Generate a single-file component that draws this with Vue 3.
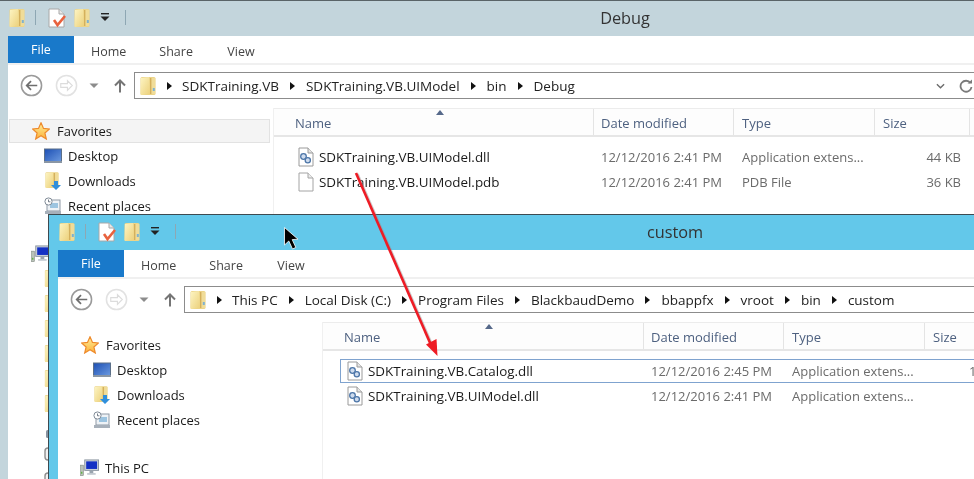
<template>
  <div class="stage">
    <svg class="defs" width="0" height="0">
      <defs>
        <linearGradient id="leaf" x1="0" y1="0" x2="1" y2="1">
          <stop offset="0" stop-color="#fdf5c4" />
          <stop offset="1" stop-color="#ecd07a" />
        </linearGradient>
        <linearGradient id="screen" x1="0" y1="0" x2="1" y2="1">
          <stop offset="0" stop-color="#1c4fb4" />
          <stop offset="1" stop-color="#6d9be0" />
        </linearGradient>
        <linearGradient id="starfill" x1="0" y1="0" x2="0" y2="1">
          <stop offset="0" stop-color="#fff09a" />
          <stop offset="1" stop-color="#fbb13a" />
        </linearGradient>
        <symbol id="i-folder" viewBox="0 0 16 20">
          <rect x="0.5" y="1" width="15" height="18" rx="1.5" fill="#ecd488" />
          <path d="M1 2 L9 1 L10 18 L1.5 19 Q0.5 19 0.5 18 Z" fill="url(#leaf)" />
          <rect x="10" y="2" width="1.6" height="16" fill="#d4b05c" />
          <rect x="11.6" y="2" width="3.6" height="16" fill="#f0dc98" />
          <rect x="12.8" y="12" width="2" height="3" fill="#7fb2cf" />
        </symbol>
        <symbol id="i-note" viewBox="0 0 18 20">
          <path d="M1 1 H11 L16 6 V19 H1 Z" fill="#fff" stroke="#a8a8a8" />
          <path d="M11 1 V6 H16" fill="#e8e8e8" stroke="#a8a8a8" />
          <path d="M6 12 L9.5 17 L17 8" fill="none" stroke="#e8623e" stroke-width="2.6" />
        </symbol>
        <symbol id="i-dll" viewBox="0 0 16 20">
          <path d="M1 1 H10 L15 6 V19 H1 Z" fill="#fff" stroke="#9a9a9a" />
          <path d="M10 1 V6 H15" fill="#e4e4e4" stroke="#9a9a9a" />
          <circle cx="5.5" cy="9.5" r="2.8" fill="#cfdcee" stroke="#4d76a8" stroke-width="1.3" />
          <circle cx="9.8" cy="13.2" r="2.6" fill="#cfdcee" stroke="#4d76a8" stroke-width="1.3" />
        </symbol>
        <symbol id="i-file" viewBox="0 0 16 20">
          <path d="M1 1 H10 L15 6 V19 H1 Z" fill="#fff" stroke="#a4a4a4" />
          <path d="M10 1 V6 H15" fill="#ececec" stroke="#a4a4a4" />
        </symbol>
        <symbol id="i-star" viewBox="0 0 18 18">
          <path d="M9 0.8 L11.5 6.4 L17.4 7 L12.9 11 L14.3 17 L9 13.8 L3.7 17 L5.1 11 L0.6 7 L6.5 6.4 Z" fill="url(#starfill)" stroke="#ee8a2c" stroke-width="1.2" />
        </symbol>
        <symbol id="i-desktop" viewBox="0 0 18 16">
          <rect x="0.5" y="1" width="17" height="13" fill="url(#screen)" stroke="#5b6f88" />
          <rect x="0" y="13" width="18" height="2" fill="#8a96a4" />
        </symbol>
        <symbol id="i-dl" viewBox="0 0 16 20">
          <use href="#i-folder" width="14" height="18" x="0" y="0" />
          <path d="M9 10 H13 V14 H16 L11 19 L6 14 H9 Z" fill="#2f8fdc" />
        </symbol>
        <symbol id="i-recent" viewBox="0 0 18 18">
          <rect x="3" y="3" width="13" height="11" fill="#eef2f6" stroke="#8f9aa6" />
          <rect x="6" y="6" width="8" height="5" fill="#9cc4e0" />
          <circle cx="4.5" cy="4.5" r="3.6" fill="#fff" stroke="#7f8a96" />
          <path d="M4.5 2.5 V4.8 H6.4" fill="none" stroke="#55606c" stroke-width="0.8" />
          <rect x="1" y="14" width="16" height="3" fill="#a7b0ba" />
        </symbol>
        <symbol id="i-pc" viewBox="0 0 20 18">
          <rect x="0" y="6" width="3.5" height="11" fill="#b9c2b9" stroke="#7c867c" stroke-width="0.6" />
          <rect x="1" y="13" width="1.5" height="2" fill="#63b347" />
          <rect x="5" y="0.5" width="14.5" height="11" fill="#cfd5dc" stroke="#8a94a0" />
          <rect x="6.5" y="2" width="11.5" height="8" fill="#1330c4" />
          <rect x="10" y="11.5" width="4" height="3" fill="#9aa4ae" />
          <rect x="7.5" y="14.5" width="9" height="1.5" fill="#b6bec6" />
        </symbol>
        <symbol id="i-winc" viewBox="0 0 16 18">
          <rect x="7" y="0" width="4" height="4.5" fill="#19b3ec" />
          <rect x="12" y="0" width="4" height="4.5" fill="#19b3ec" />
          <rect x="7" y="5.5" width="4" height="4" fill="#19b3ec" />
          <rect x="12" y="5.5" width="4" height="4" fill="#19b3ec" />
          <rect x="2" y="10" width="14" height="8" rx="1.5" fill="#8793a0" />
        </symbol>
        <symbol id="i-disk" viewBox="0 0 16 18">
          <rect x="1" y="3" width="14" height="12" rx="3" fill="#f2f2f2" stroke="#8f8f8f" stroke-width="1.4" />
        </symbol>
      </defs>
    </svg>

    <section v-for="win in windows" :key="win.title" class="win" :class="win.kind" :style="{ left: win.x + 'px', top: win.y + 'px', width: win.w + 'px', height: win.h + 'px' }">
      <header class="titlebar">
        <svg class="ic-folder first"><use href="#i-folder" /></svg>
        <i class="tsep"></i>
        <svg class="ic-note"><use href="#i-note" /></svg>
        <svg class="ic-folder"><use href="#i-folder" /></svg>
        <svg class="ic-drop" viewBox="0 0 10 9">
          <rect x="1" y="0" width="8" height="1.4" fill="#222" />
          <path d="M0.5 3.5 H9.5 L5 8 Z" fill="#222" />
        </svg>
        <i class="tsep"></i>
        <span class="title">{{ win.title }}</span>
      </header>

      <div class="pane">
        <nav class="ribbon">
          <span class="file-tab">File</span>
          <span v-for="t in tabs" :key="t" class="tab">{{ t }}</span>
        </nav>

        <div class="toolbar">
          <svg class="btn-back" viewBox="0 0 24 24">
            <circle cx="12" cy="12" r="10.5" fill="#fff" stroke="#9a9a9a" stroke-width="1.6" />
            <path d="M18 12 H7 M11.5 7.5 L7 12 L11.5 16.5" fill="none" stroke="#6e6e6e" stroke-width="1.8" />
          </svg>
          <svg class="btn-forward" viewBox="0 0 24 24">
            <circle cx="12" cy="12" r="10.5" fill="#fff" stroke="#e2e2e2" stroke-width="1.6" />
            <path d="M6 10 H13 V7 L18 12 L13 17 V14 H6 Z" fill="none" stroke="#dcdcdc" stroke-width="1.2" />
          </svg>
          <svg class="caret" viewBox="0 0 10 6"><path d="M0.5 0.5 H9.5 L5 5 Z" fill="#8c8c8c" /></svg>
          <svg class="up" viewBox="0 0 12 14">
            <path d="M6 13.5 V2 M1 6.5 L6 1.5 L11 6.5" fill="none" stroke="#757575" stroke-width="2" />
          </svg>
          <div class="address">
            <svg class="ic-folder"><use href="#i-folder" /></svg>
            <template v-for="c in win.crumbs" :key="c">
              <i class="chev"></i>
              <span class="crumb">{{ c }}</span>
            </template>
            <span class="addr-end">
              <svg class="ad-down" viewBox="0 0 10 6"><path d="M1 1 L5 5 L9 1" fill="none" stroke="#6b6b6b" stroke-width="1.5" /></svg>
              <svg class="ad-refresh" viewBox="0 0 14 14">
                <path d="M11.5 4 A5.5 5.5 0 1 0 12.5 8" fill="none" stroke="#7a7a7a" stroke-width="1.8" />
                <path d="M8.5 4.5 H13 V0.5 Z" fill="#7a7a7a" />
              </svg>
            </span>
          </div>
        </div>

        <div class="main">
          <aside class="side">
            <div v-for="(n, i) in navItems" :key="i" class="nav-row" :class="[n.level, { hot: win.hot && i === 0 }]">
              <svg v-if="n.icon" :class="'nav-' + n.icon"><use :href="'#i-' + n.icon" /></svg>
              <!-- the back window's lower tree is covered by the front window -->
              <span v-if="!(win.hot && n.covered)">{{ n.label }}</span>
            </div>
          </aside>

          <div class="list">
            <div class="cols">
              <div class="col c-name">
                Name
                <svg class="sort" viewBox="0 0 8 5"><path d="M0 5 L4 0 L8 5 Z" fill="#56698a" /></svg>
              </div>
              <div class="col c-date">Date modified</div>
              <div class="col c-type">Type</div>
              <div class="col c-size">Size</div>
            </div>
            <div v-for="r in win.rows" :key="r.name" class="row" :class="{ sel: r.sel }">
              <div class="cell r-name">
                <svg class="file-ic"><use :href="'#i-' + r.icon" /></svg>
                {{ r.name }}
              </div>
              <div class="cell c-date">{{ r.date }}</div>
              <div class="cell c-type">{{ r.type }}</div>
              <div class="cell c-size num">{{ r.size }}</div>
            </div>
          </div>
        </div>
      </div>
    </section>

    <!-- annotation arrow and mouse pointer sit over both windows -->
    <svg class="overlay" viewBox="0 0 974 479">
      <path d="M356 173 L431 345" stroke="#8d8d8d" stroke-opacity="0.45" stroke-width="2.6" transform="translate(1.5 1)" />
      <path d="M356 173 L431 345" stroke="#ee1c25" stroke-width="2.6" />
      <path d="M437.5 356 L426 344.5 L436.5 339 Z" fill="#ee1c25" />
      <path d="M284.5 227.5 V245 L288.8 241 L292.5 249 L295.8 247.4 L292.2 239.6 L298 239.2 Z" fill="#000" stroke="#fff" stroke-width="0.8" />
    </svg>
  </div>
</template>

<script setup>
const tabs = ['Home', 'Share', 'View']

const navItems = [
  { icon: 'star', label: 'Favorites', level: 'top' },
  { icon: 'desktop', label: 'Desktop', level: 'child' },
  { icon: 'dl', label: 'Downloads', level: 'child' },
  { icon: 'recent', label: 'Recent places', level: 'child' },
  { label: '', level: 'gap' },
  { icon: 'pc', label: 'This PC', level: 'top', covered: true },
  { icon: 'folder', label: '', level: 'child' },
  { icon: 'folder', label: '', level: 'child' },
  { icon: 'folder', label: '', level: 'child' },
  { icon: 'folder', label: '', level: 'child' },
  { icon: 'folder', label: '', level: 'child' },
  { icon: 'folder', label: '', level: 'child' },
  { icon: 'winc', label: '', level: 'child' },
  { icon: 'disk', label: '', level: 'child' },
  { icon: 'disk', label: '', level: 'child' }
]

const windows = [
  {
    kind: 'back',
    title: 'Debug',
    hot: true,
    x: -2,
    y: 0,
    w: 1010,
    h: 479,
    crumbs: ['SDKTraining.VB', 'SDKTraining.VB.UIModel', 'bin', 'Debug'],
    rows: [
      { icon: 'dll', name: 'SDKTraining.VB.UIModel.dll', date: '12/12/2016 2:41 PM', type: 'Application extens...', size: '44 KB' },
      { icon: 'file', name: 'SDKTraining.VB.UIModel.pdb', date: '12/12/2016 2:41 PM', type: 'PDB File', size: '36 KB' }
    ]
  },
  {
    kind: 'front',
    title: 'custom',
    hot: false,
    x: 48,
    y: 214,
    w: 1100,
    h: 265,
    crumbs: ['This PC', 'Local Disk (C:)', 'Program Files', 'BlackbaudDemo', 'bbappfx', 'vroot', 'bin', 'custom'],
    rows: [
      { icon: 'dll', name: 'SDKTraining.VB.Catalog.dll', date: '12/12/2016 2:45 PM', type: 'Application extens...', size: '188 KB', sel: true },
      { icon: 'dll', name: 'SDKTraining.VB.UIModel.dll', date: '12/12/2016 2:41 PM', type: 'Application extens...', size: '44 KB' }
    ]
  }
]
</script>

<style>
html,
body {
  margin: 0;
  overflow: hidden;
  background: #fff;
}
</style>

<style scoped>
.stage {
  position: relative;
  width: 974px;
  height: 479px;
  overflow: hidden;
  font-family: "Open Sans", "Noto Sans", sans-serif;
  font-size: 13px;
  color: #1a1a1a;
  filter: blur(0.4px);
}

.defs {
  position: absolute;
}

.win {
  position: absolute;
  box-sizing: border-box;
  display: flex;
  flex-direction: column;
  padding-left: 9px;
  overflow: hidden;
}

.back {
  background: #c3d5dc;
  border-left: 1px solid #5a6468;
  border-top: 1px solid #5a6468;
}

.front {
  background: #63c8ea;
  border-left: 1px solid #3d4a50;
  border-top: 1px solid #3d4a50;
}

.titlebar {
  height: 35px;
  flex: none;
  display: flex;
  align-items: center;
  box-sizing: border-box;
  padding-bottom: 2px;
}

.ic-folder {
  width: 16px;
  height: 20px;
  flex: none;
}

.first {
  margin-left: 1px;
}

.tsep {
  width: 1px;
  height: 15px;
  background: #8ea7b3;
  margin-left: 10px;
  margin-right: 12px;
}

.ic-note {
  width: 18px;
  height: 20px;
  margin-right: 8px;
}

.ic-drop {
  width: 10px;
  height: 9px;
  margin-left: 10px;
  margin-right: 5px;
}

.title {
  width: 200px;
  margin-left: 387px;
  text-align: center;
  font-size: 16.3px;
  color: #333;
}

.pane {
  flex: 1;
  background: #fff;
  display: flex;
  flex-direction: column;
  min-height: 0;
}

.ribbon {
  height: 27px;
  flex: none;
  display: flex;
  align-items: center;
  gap: 33px;
  border-bottom: 2px solid #f0f0f0;
}

.file-tab {
  width: 66px;
  height: 100%;
  margin-right: -16px;
  background: #1979ca;
  color: #fff;
  font-size: 12.5px;
  display: flex;
  align-items: center;
  justify-content: center;
}

.tab {
  font-size: 12.5px;
  color: #444;
  min-width: 35px;
  padding-top: 3px;
}

.toolbar {
  height: 43px;
  flex: none;
  display: flex;
  align-items: flex-start;
  padding-top: 7px;
  box-sizing: border-box;
}

.btn-back,
.btn-forward {
  width: 23px;
  height: 23px;
  margin-top: 2px;
  margin-left: 12px;
  flex: none;
}

.caret {
  width: 10px;
  height: 6px;
  margin: 11px 0 0 11px;
  flex: none;
}

.up {
  width: 12px;
  height: 14px;
  margin: 7px 0 0 15px;
  flex: none;
}

.address {
  flex: 1;
  height: 27px;
  margin-left: 8px;
  margin-right: 8px;
  box-sizing: border-box;
  border: 1px solid #8c8c8c;
  display: flex;
  align-items: center;
  padding-left: 5px;
  font-size: 13.5px;
  color: #222;
}

.chev {
  width: 0;
  height: 0;
  border-left: 5px solid #111;
  border-top: 4px solid transparent;
  border-bottom: 4px solid transparent;
  margin-left: 11px;
  margin-right: 11px;
  flex: none;
}

.chev:first-of-type {
  margin-right: 10px;
}

.crumb {
  white-space: nowrap;
}

.addr-end {
  margin-left: auto;
  display: flex;
  align-items: center;
  gap: 14px;
  padding-right: 26px;
}

.ad-down {
  width: 9px;
  height: 6px;
}

.ad-refresh {
  width: 14px;
  height: 14px;
}

.main {
  flex: 1;
  display: flex;
  min-height: 0;
}

.side {
  width: 265px;
  flex: none;
  box-sizing: border-box;
  padding-top: 10px;
}

.front .side {
  width: 264px;
}

.nav-row {
  height: 25px;
  display: flex;
  align-items: center;
  box-sizing: border-box;
  margin-left: 1px;
  margin-right: 3px;
  border: 1px solid transparent;
  gap: 7px;
  color: #1a1a1a;
  white-space: nowrap;
}

.front .nav-row {
  margin-left: 0;
}

.nav-row.hot {
  background: #f4f4f4;
  border-color: #e2e2e2;
  height: 24px;
  margin-top: 1px;
}

.nav-row.gap {
  height: 23px;
}

.nav-row.top {
  padding-left: 22px;
}

.nav-row.child {
  padding-left: 34px;
}

.nav-star {
  width: 18px;
  height: 18px;
}

.nav-desktop {
  width: 18px;
  height: 16px;
  margin-right: -1px;
}

.nav-dl {
  width: 18px;
  height: 20px;
  margin-right: -1px;
}

.nav-recent {
  width: 18px;
  height: 18px;
  margin-right: -1px;
}

.nav-pc {
  width: 19px;
  height: 18px;
  margin-left: -1px;
  margin-right: -1px;
}

.nav-folder {
  width: 16px;
  height: 19px;
}

.nav-winc,
.nav-disk {
  width: 16px;
  height: 18px;
}

.list {
  flex: 1;
  min-width: 0;
  border-left: 1px solid #f0f0f0;
}

.cols {
  height: 29px;
  box-sizing: border-box;
  border-top: 1px solid #ececec;
  border-bottom: 2px solid #e6e6e6;
  display: flex;
  align-items: center;
  color: #4e6180;
  background: #fdfdfd;
}

.col {
  height: 100%;
  display: flex;
  align-items: center;
  box-sizing: border-box;
  padding-top: 1px;
  border-right: 1px solid #e4e4e4;
}

.c-name {
  width: 320px;
  flex: none;
  padding-left: 21px;
  position: relative;
}

.front .c-name {
  width: 321px;
}

.sort {
  position: absolute;
  left: 162px;
  top: 1px;
  width: 8px;
  height: 5px;
}

.c-date {
  width: 140px;
  flex: none;
  padding-left: 7px;
}

.c-type {
  width: 141px;
  flex: none;
  padding-left: 8px;
}

.c-size {
  width: 95px;
  flex: none;
  padding-left: 8px;
}

.row {
  height: 24px;
  margin: 8px 0 -7px 17px;
  box-sizing: border-box;
  border: 1px solid transparent;
  display: flex;
  align-items: center;
  color: #6b6b6b;
  white-space: nowrap;
}

.row + .row {
  margin-top: 8px;
}

.row.sel {
  border-color: #7fa3cf;
}

.cell {
  display: flex;
  align-items: center;
  box-sizing: border-box;
}

.r-name {
  width: 302px;
  flex: none;
  color: #1a1a1a;
  font-size: 13.4px;
  gap: 5px;
  padding-left: 6px;
}

.front .r-name {
  width: 303px;
}

.file-ic {
  width: 16px;
  height: 20px;
  flex: none;
}

.num {
  justify-content: flex-end;
  padding-right: 9px;
  padding-left: 0;
}

.overlay {
  position: absolute;
  left: 0;
  top: 0;
  width: 974px;
  height: 479px;
  pointer-events: none;
}
</style>
